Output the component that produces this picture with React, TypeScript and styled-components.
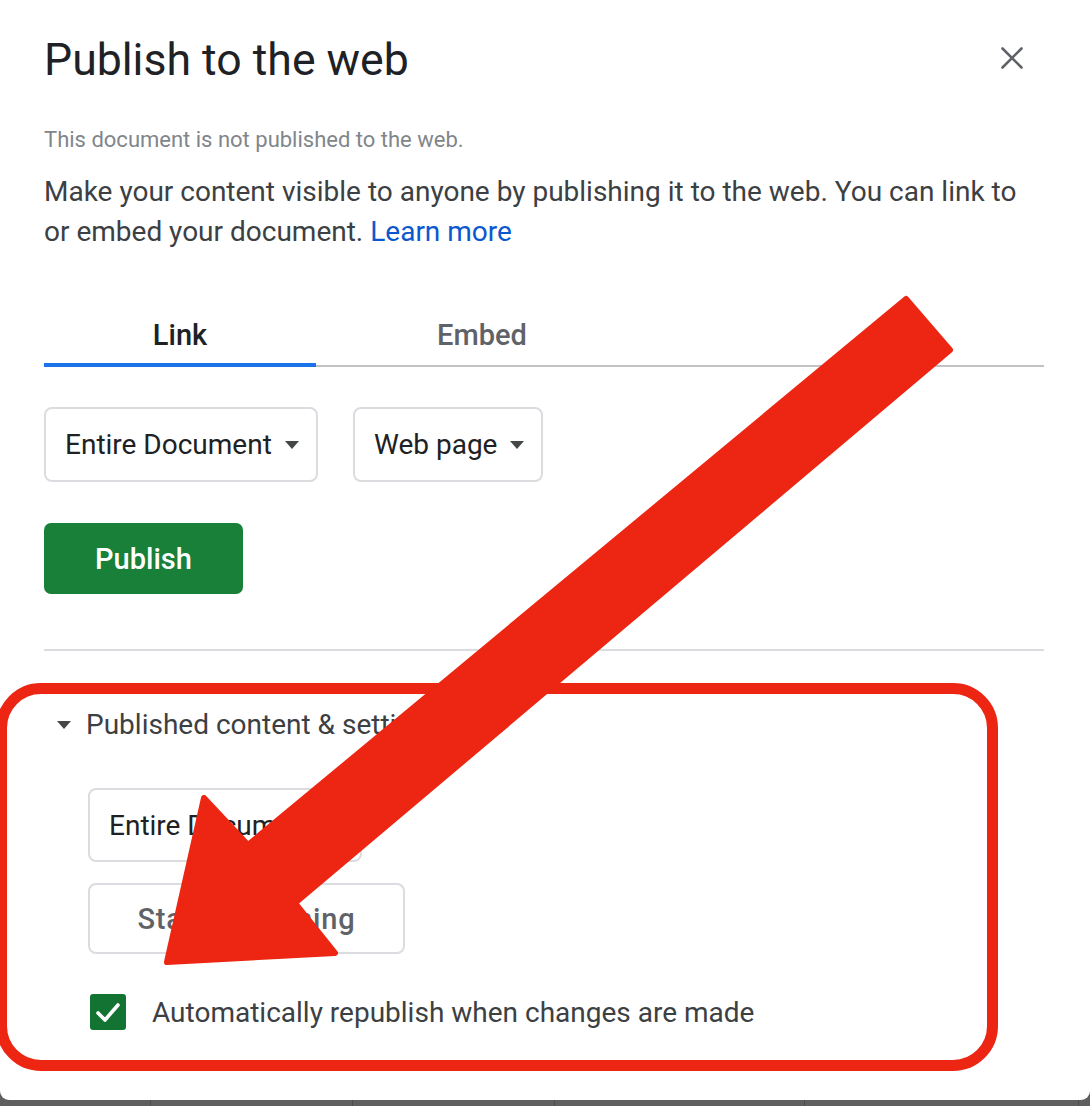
import React from "react";
import styled, { createGlobalStyle } from "styled-components";

const GlobalStyle = createGlobalStyle`
  html, body { margin: 0; padding: 0; background: #5f5f5f; }
  body { font-family: Roboto, "Liberation Sans", Arial, sans-serif; }
  * { box-sizing: border-box; }
`;

const Page = styled.div`
  position: relative;
  width: 1090px;
  height: 1106px;
  overflow: hidden;
  background: #5f5f5f;
`;

const Dialog = styled.div`
  position: relative;
  width: 1090px;
  height: 1100px;
  background: #ffffff;
  border-radius: 0 0 9px 9px;
  padding: 34px 46px 0 44px;
  display: flex;
  flex-direction: column;
  align-items: flex-start;
`;

const Header = styled.div`
  width: 100%;
  display: flex;
  justify-content: space-between;
  align-items: flex-start;
`;

const Title = styled.h1`
  margin: 0;
  font-size: 44.6px;
  line-height: 52px;
  font-weight: 400;
  color: #202124;
`;

const CloseButton = styled.button`
  margin: 4px 12px 0 0;
  width: 40px;
  height: 40px;
  padding: 0;
  border: none;
  background: transparent;
  display: flex;
  align-items: center;
  justify-content: center;
  color: #5f6368;
`;

const Status = styled.p`
  margin: 42px 0 0;
  font-size: 22px;
  line-height: 24px;
  color: #80868b;
`;

const Intro = styled.p`
  margin: 20px 0 0;
  max-width: 985px;
  font-size: 28px;
  line-height: 40px;
  color: #3c4043;
`;

const Link = styled.a`
  color: #0b57d0;
  text-decoration: none;
`;

const TabBar = styled.div`
  margin-top: 55px;
  width: 100%;
  display: flex;
  border-bottom: 2px solid #c2c2c2;
`;

const Tab = styled.div<{ $active?: boolean; $width: number }>`
  width: ${(p) => p.$width}px;
  height: 60px;
  line-height: 56px;
  text-align: center;
  font-size: 29px;
  font-weight: 500;
  color: ${(p) => (p.$active ? "#202124" : "#5f6368")};
  border-bottom: 4px solid ${(p) => (p.$active ? "#1a73e8" : "transparent")};
  margin-bottom: -2px;
`;

const SelectRow = styled.div`
  margin-top: 40px;
  display: flex;
  gap: 35px;
`;

const Select = styled.div<{ $width: number; $height: number }>`
  width: ${(p) => p.$width}px;
  height: ${(p) => p.$height}px;
  border: 2px solid #dadce0;
  border-radius: 8px;
  padding: 0 17px 0 19px;
  display: flex;
  align-items: center;
  justify-content: space-between;
  gap: 10px;
  font-size: 28px;
  color: #202124;
  background: #fff;
  white-space: nowrap;
`;

const Caret = styled.span`
  width: 0;
  height: 0;
  border-left: 7.5px solid transparent;
  border-right: 7.5px solid transparent;
  border-top: 8px solid #444746;
  flex: none;
`;

const PublishButton = styled.button`
  margin-top: 41px;
  width: 199px;
  height: 71px;
  border: none;
  border-radius: 7px;
  background: #188038;
  color: #fff;
  font-family: inherit;
  font-size: 29px;
  font-weight: 500;
  padding: 0;
`;

const Divider = styled.hr`
  margin: 55px 0 0;
  width: 100%;
  height: 2px;
  border: none;
  background: #dadce0;
`;

const SectionHeader = styled.div`
  margin-top: 54px;
  padding-left: 13px;
  height: 40px;
  display: flex;
  align-items: center;
  gap: 15px;
  font-size: 28px;
  line-height: 40px;
  color: #3c4043;
  white-space: nowrap;
`;

const SectionBody = styled.div`
  padding-left: 44px;
  display: flex;
  flex-direction: column;
  align-items: flex-start;
`;

const SectionSelect = styled(Select)`
  margin-top: 43px;
`;

const OutlineButton = styled.button`
  margin-top: 21px;
  width: 317px;
  height: 71px;
  border: 2px solid #dadce0;
  border-radius: 8px;
  background: #fff;
  color: #5f6368;
  font-family: inherit;
  font-size: 29px;
  font-weight: 500;
  letter-spacing: 0.8px;
  padding: 0;
`;

const CheckRow = styled.label`
  margin-top: 40px;
  margin-left: 2px;
  display: flex;
  align-items: center;
  gap: 26px;
  font-size: 28px;
  color: #3c4043;
  white-space: nowrap;
`;

const CheckBox = styled.span`
  width: 36px;
  height: 36px;
  border-radius: 3px;
  background: #137333;
  display: flex;
  align-items: center;
  justify-content: center;
  flex: none;
`;

const Strip = styled.div`
  height: 6px;
  display: flex;
`;

const StripCell = styled.div<{ $width: number }>`
  width: ${(p) => p.$width}px;
  flex: none;
  border-right: 1px solid #4c4c4c;
`;

const RedFrame = styled.div`
  position: absolute;
  left: -4px;
  top: 683px;
  width: 1002px;
  height: 388px;
  border: 11px solid #ec2612;
  border-radius: 45px;
  pointer-events: none;
`;

const ArrowLayer = styled.svg`
  position: absolute;
  left: 0;
  top: 0;
  pointer-events: none;
`;

export default function App() {
  return (
    <>
      <GlobalStyle />
      <Page>
        <Dialog>
          <Header>
            <Title>Publish to the web</Title>
            <CloseButton aria-label="Close">
              <svg width="24" height="24" viewBox="0 0 24 24">
                <path d="M2.5 2.5 L21.5 21.5 M21.5 2.5 L2.5 21.5" stroke="#5f6368" strokeWidth="2.6" strokeLinecap="round" fill="none" />
              </svg>
            </CloseButton>
          </Header>
          <Status>This document is not published to the web.</Status>
          <Intro>
            Make your content visible to anyone by publishing it to the web. You can link to or embed your document.{" "}
            <Link href="#">Learn more</Link>
          </Intro>
          <TabBar>
            <Tab $active $width={272}>Link</Tab>
            <Tab $width={332}>Embed</Tab>
          </TabBar>
          <SelectRow>
            <Select $width={274} $height={75}>
              <span>Entire Document</span>
              <Caret />
            </Select>
            <Select $width={190} $height={75}>
              <span>Web page</span>
              <Caret />
            </Select>
          </SelectRow>
          <PublishButton>Publish</PublishButton>
          <Divider />
          <SectionHeader>
            <Caret />
            <span>Published content &amp; settings</span>
          </SectionHeader>
          <SectionBody>
            <SectionSelect $width={274} $height={74}>
              <span>Entire Document</span>
              <Caret />
            </SectionSelect>
            <OutlineButton>Start publishing</OutlineButton>
            <CheckRow>
              <CheckBox>
                <svg width="36" height="36" viewBox="0 0 36 36">
                  <path d="M8 19 L15 26 L28 11" stroke="#fff" strokeWidth="3.6" fill="none" strokeLinecap="round" strokeLinejoin="round" />
                </svg>
              </CheckBox>
              <span>Automatically republish when changes are made</span>
            </CheckRow>
          </SectionBody>
        </Dialog>
        <Strip>
          <StripCell $width={151} />
          <StripCell $width={202} />
          <StripCell $width={202} />
          <StripCell $width={250} />
          <StripCell $width={274} />
        </Strip>
        <RedFrame />
        <ArrowLayer width="1090" height="1106" viewBox="0 0 1090 1106">
          <polygon
            points="906,299 950,350 295,903 335,953 167,962 204,798 248,845"
            fill="#ec2612"
            stroke="#ec2612"
            strokeWidth="6"
            strokeLinejoin="round"
          />
        </ArrowLayer>
      </Page>
    </>
  );
}
